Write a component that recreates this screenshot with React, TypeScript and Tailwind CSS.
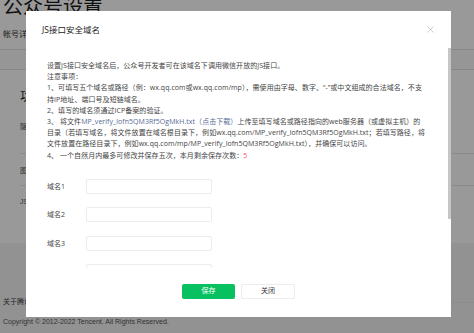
import { X } from "lucide-react";

const font = { fontFamily: '"Open Sans", "Noto Sans CJK SC", sans-serif' };
const pageFont = { fontFamily: '"Liberation Sans", "Noto Sans CJK SC", sans-serif' };

function PageBehind() {
  return (
    <div className="flex h-full flex-col bg-white text-[#222]" style={pageFont}>
      <div className="h-[50px] border-b border-[#e2e2e2] pl-[3px]">
        <div className="-mt-[6px] text-[20px] leading-[26px] text-[#1a1a1a]">公众号设置</div>
        <div className="mt-[10px] text-[8px] leading-[10px] text-[#333]">帐号详情</div>
      </div>
      <div className="h-[20px] border-b border-[#e2e2e2] bg-[#fafafa]" />
      <div className="flex h-[173px] flex-col pl-[20px]">
        <div className="mt-[20px] text-[12px] leading-[14px] text-[#222]">功能设置</div>
        <div className="mt-[18px] flex h-[32px] items-start border-b border-[#e8e8e8] text-[7px] leading-[9px] text-[#555]">
          隐私设置
        </div>
        <div className="flex h-[32px] items-start border-b border-[#e8e8e8] pt-[12px] text-[7px] leading-[9px] text-[#555]">
          图片水印
        </div>
        <div className="flex h-[32px] items-start pt-[11px] text-[7px] leading-[9px] text-[#555]">
          JS接口安全域名
        </div>
      </div>
      <div className="flex flex-1 flex-col bg-[#f4f4f4] pl-[3px]">
        <div className="h-[60px] border-b border-[#ececec]" />
        <div className="mt-[-6px] text-[7px] leading-[9px] text-[#444]">关于腾讯</div>
        <div className="mt-[11px] text-[7px] leading-[9px] text-[#555]">
          Copyright © 2012-2022 Tencent. All Rights Reserved.
        </div>
      </div>
    </div>
  );
}

function DomainRow({ label }: { label: string }) {
  return (
    <div className="flex h-[15px] items-center">
      <div className="w-[39px] text-[7px] leading-[9px] text-[#444]">{label}</div>
      <div className="h-[15px] w-[126px] rounded-[2px] border border-[#ececec] bg-white" />
    </div>
  );
}

export default function App() {
  return (
    <div className="relative h-[333px] w-[474px] overflow-hidden" style={font}>
      <PageBehind />
      <div className="absolute inset-0 bg-black/40" />

      {/* dialog */}
      <div className="absolute left-[26px] top-[11px] flex h-[306px] w-[425px] flex-col bg-white">
        <div className="flex h-[37px] items-center justify-between pl-[16px] pr-[15px]">
          <div className="text-[8.5px] leading-[10px] text-[#1a1a1a]">JS接口安全域名</div>
          <X className="h-[11px] w-[11px] text-[#a8a8a8]" strokeWidth={1.2} />
        </div>

        <div className="relative h-[220px] overflow-hidden">
          <div className="whitespace-nowrap pl-[21px] pt-[12px] text-[7px] leading-[11.2px] tracking-[0.05px] text-[#444]">
            <p>设置JS接口安全域名后，公众号开发者可在该域名下调用微信开放的JS接口。</p>
            <p>注意事项：</p>
            <p>1、可填写五个域名或路径（例：wx.qq.com或wx.qq.com/mp），需使用由字母、数字、“-”或中文组成的合法域名，不支</p>
            <p>持IP地址、端口号及短链域名。</p>
            <p>2、填写的域名须通过ICP备案的验证。</p>
            <p>
              3、 将文件
              <span className="text-[#576b95]">MP_verify_lofn5QM3Rf5OgMkH.txt（点击下载）</span>
              上传至填写域名或路径指向的web服务器（或虚拟主机）的
            </p>
            <p>目录（若填写域名，将文件放置在域名根目录下，例如wx.qq.com/MP_verify_lofn5QM3Rf5OgMkH.txt；若填写路径，将</p>
            <p>文件放置在路径目录下，例如wx.qq.com/mp/MP_verify_lofn5QM3Rf5OgMkH.txt），并确保可以访问。</p>
            <p>
              4、 一个自然月内最多可修改并保存五次，本月剩余保存次数：<span className="text-[#fa5151]">5</span>
            </p>
          </div>

          <div className="mt-[18px] flex flex-col gap-[13.5px] pl-[21px]">
            <DomainRow label="域名1" />
            <DomainRow label="域名2" />
            <DomainRow label="域名3" />
            <DomainRow label="" />
          </div>

          <div className="absolute right-0 top-0 h-[171px] w-[3px] bg-[#c6c6c6]" />
        </div>

        <div className="flex flex-1 items-center justify-center gap-[6px] pb-[2px]">
          <button className="flex h-[15px] w-[53px] items-center justify-center rounded-[2px] bg-[#07c160] text-[7px] text-white">
            保存
          </button>
          <button className="flex h-[15px] w-[54px] items-center justify-center rounded-[2px] border border-[#ececec] bg-white text-[7px] text-[#333]">
            关闭
          </button>
        </div>
      </div>
    </div>
  );
}
